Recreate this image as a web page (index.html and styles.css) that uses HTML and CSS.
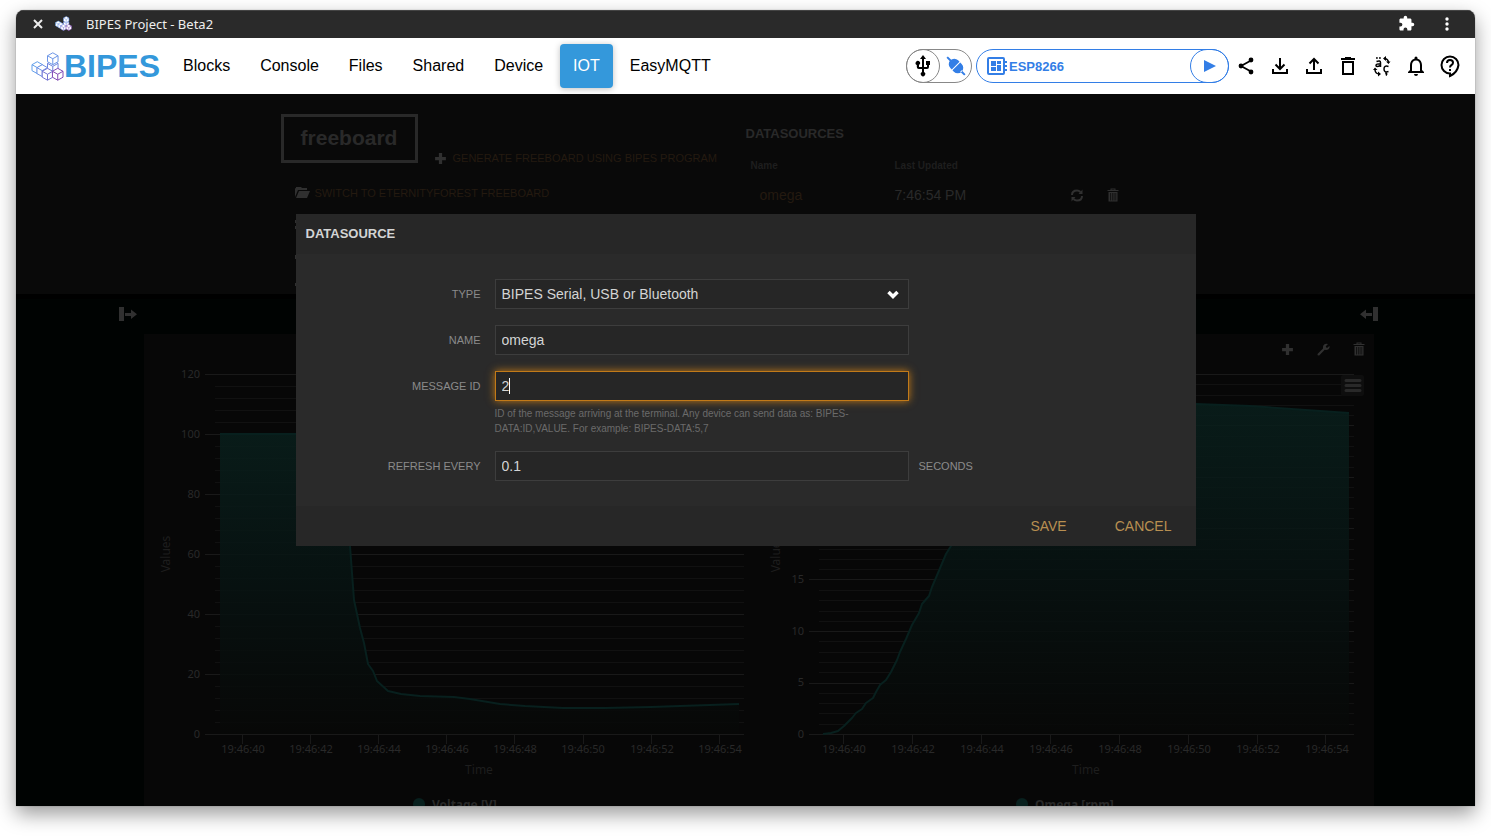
FILE: index.html
```html
<!DOCTYPE html>
<html lang="en">
<head>
<meta charset="utf-8">
<title>BIPES Project - Beta2</title>
<link rel="stylesheet" href="styles.css">
</head>
<body>
<svg class="defs" width="0" height="0" aria-hidden="true">
  <defs>
    <linearGradient id="area" x1="0" y1="0" x2="0" y2="1">
      <stop offset="0" stop-color="#091f1c"/><stop offset=".5" stop-color="#071312"/><stop offset="1" stop-color="#070807"/>
    </linearGradient>
    <g id="cube">
      <path d="M0-18L16-9V9L0 18L-16 9V-9Z"/><path d="M-16-9L0 0L16-9M0 0V18" fill="none"/>
    </g>
    <symbol id="logo" viewBox="94 155 100 87">
      <use href="#cube" x="160" y="198" stroke="#6c83dd"/><use href="#cube" x="160" y="175" stroke="#6b95e6"/>
      <use href="#cube" x="113" y="202" stroke="#5f9eea"/><use href="#cube" x="128" y="211" stroke="#6b90e4"/>
      <use href="#cube" x="144" y="222" stroke="#7373d2"/><use href="#cube" x="175" y="222" stroke="#8148b4"/>
    </symbol>
    <symbol id="plus" viewBox="0 0 12 12"><path d="M4.500 1h3v3.500h3.500v3h-3.500v3.500h-3v-3.500h-3.500v-3h3.500z"/></symbol>
    <symbol id="trash" viewBox="0 0 12 14"><path fill-rule="evenodd" d="M3.500 2V.500h5V2H11.500v1H.500V2zM4.500 2h3v-.600h-3zM1.500 4h9v9.500h-9zM3 5v7.500h.700V5zM4.900 5v7.500h.700V5zM6.700 5v7.500h.700V5zM8.500 5v7.500h.700V5z"/></symbol>
  </defs>
</svg>

<div class="window">
  <div class="titlebar">
    <button class="bar-button" aria-label="Close"><svg width="10" height="10" viewBox="0 0 10 10"><path d="M1 1l8 8M9 1l-8 8" stroke="#eee" stroke-width="2"/></svg></button>
    <svg class="favicon favicon-tile" width="17" height="15"><use href="#logo"/></svg>
    <span class="window-title">BIPES Project - Beta2</span>
    <button class="bar-button" aria-label="Extensions"><svg width="17" height="17" viewBox="0 0 24 24" fill="#fff"><path d="M20.500 11H19V7c0-1.100-.900-2-2-2h-4V3.500a2.500 2.500 0 0 0-5 0V5H4c-1.100 0-2 .900-2 2v3.800h1.500a2.700 2.700 0 0 1 0 5.400H2V20c0 1.100.900 2 2 2h3.800v-1.500a2.700 2.700 0 0 1 5.400 0V22H17c1.100 0 2-.900 2-2v-4h1.500a2.500 2.500 0 0 0 0-5z"/></svg></button>
    <button class="bar-button menu-button" aria-label="Menu"><svg width="4" height="14" fill="#fff"><circle cx="2" cy="2" r="1.700"/><circle cx="2" cy="7" r="1.700"/><circle cx="2" cy="12" r="1.700"/></svg></button>
  </div>

  <header class="header">
    <div class="brand"><svg width="33" height="29"><use href="#logo"/></svg><span>BIPES</span></div>
    <nav class="tabs">
      <a href="#blocks">Blocks</a><a href="#console">Console</a><a href="#files">Files</a><a href="#shared">Shared</a><a href="#device">Device</a><a href="#iot" class="active" aria-current="page">IOT</a><a href="#mqtt">EasyMQTT</a>
    </nav>
    <div class="connection">
      <button class="usb" aria-label="USB"><svg width="24" height="24" viewBox="0 0 24 24"><path d="M15 7v4h1v2h-3V5h2l-3-4-3 4h2v8H8v-2.070A2.200 2.200 0 1 0 5.800 11V13a2 2 0 0 0 2 2H11v3.050a2.200 2.200 0 1 0 2 0V15h3a2 2 0 0 0 2-2v-2h1V7z"/></svg></button>
      <button class="plug" aria-label="Connect"><svg width="20" height="20" viewBox="0 0 20 20" fill="#337ee6"><g transform="rotate(45 10 10)"><path d="M-2.500 9H3v2h-5.500zM17 9h5.500v2H17zM9.500 4.500V15.500H7.500A5.500 5.500 0 0 1 7.500 4.500zM10.500 4.500V15.500H12.500A5.500 5.500 0 0 0 12.500 4.500z"/></g></svg></button>
    </div>
    <div class="device">
      <svg width="22" height="20" viewBox="0 0 22 20" fill="#337ee6"><path fill-rule="evenodd" d="M2 1h14q2 0 2 2v2h2v2h-2v2h2v2h-2v2h2v2h-2v2q0 2-2 2H2q-2 0-2-2V3q0-2 2-2zM2 3v14h14V3zM4 5h5v5H4zM10 5h4v3h-4zM4 11h5v4H4zM10 9h4v6h-4z"/></svg>
      <span>ESP8266</span>
      <button class="run" aria-label="Run"><svg width="12" height="12"><path d="M0 0L12 6L0 12z" fill="#337ee6"/></svg></button>
    </div>
    <div class="tools">
      <button aria-label="Share"><svg viewBox="0 0 24 24"><path d="M17 6.500L7 12l10 5.500" fill="none" stroke="#000" stroke-width="1.800"/><circle cx="17" cy="6" r="2.400"/><circle cx="7" cy="12" r="2.400"/><circle cx="17" cy="18" r="2.400"/></svg></button>
      <button aria-label="Download"><svg viewBox="0 0 24 24" class="line"><path d="M12 4v11M7.500 10.500L12 15l4.500-4.500M5 15v4h14v-4"/></svg></button>
      <button aria-label="Upload"><svg viewBox="0 0 24 24" class="line"><path d="M12 16V5M7.500 9.500L12 5l4.500 4.500M5 15v4h14v-4"/></svg></button>
      <button aria-label="Delete"><svg viewBox="0 0 24 24" class="line"><path d="M5 5h14M9 4h6M7 8h10v12H7z"/></svg></button>
      <button aria-label="Language"><svg viewBox="0 0 24 24" class="line thin"><path d="M6.500 7.500q4-1.500 4 1V13M10.500 10Q6 9.500 6 11.500t4.500 0M6 4h1.800M9 4h1.800M18.500 12.500q-4.500-1.500-4.500 2.500t4.500 2.500M16 18v1.500q1.500 0 0 2M14 4.500q4 0 4.500 4M9.500 20q-4 0-4.500-4"/><path d="M13 4.500l3-2.500v5zM16 7.500h4.500L18.500 10zM3 16h4.500L5 13.500zM8 17.500v5l3-2.500z" fill="#000" stroke="none"/></svg></button>
      <button aria-label="Notifications"><svg viewBox="0 0 24 24"><path d="M12 22a2 2 0 0 0 2-2h-4a2 2 0 0 0 2 2zm6-6v-5c0-3.070-1.630-5.640-4.500-6.320V4a1.500 1.500 0 0 0-3 0v.680C7.640 5.360 6 7.920 6 11v5l-2 2v1h16v-1zm-2 1H8v-6c0-2.480 1.510-4.500 4-4.500s4 2.020 4 4.500z"/></svg></button>
      <button aria-label="Help"><svg viewBox="0 0 24 24" class="line"><path d="M12 2.500a8.500 8.500 0 1 0 0 17V22q7.500-3.500 8.500-11A8.500 8.500 0 0 0 12 2.500zM9 9q0-3 3-3t3 2.700q0 1.500-1.500 2.300T12 13.500M12 15v2"/></svg></button>
    </div>
  </header>

  <main class="stage">
    <section class="admin">
      <div class="admin-inner">
        <div class="admin-left">
          <div class="logo-row">
            <div class="freeboard-logo">freeboard</div>
            <a href="#generate" class="action"><svg width="13" height="13"><use href="#plus"/></svg><span>GENERATE FREEBOARD USING BIPES PROGRAM</span></a>
          </div>
          <a href="#switch" class="action switch"><svg width="15" height="12" viewBox="0 0 15 12"><path d="M0 10V1.500L1 1V0h5l1 1h5v2H3zM1 11L4 4h11l-3 7z"/></svg><span>SWITCH TO ETERNITYFOREST FREEBOARD</span></a>
          <div class="admin-icons">
            <svg width="14" height="12" viewBox="0 0 14 12"><path d="M0 1h14v3H0zM0 7h14v3H0z"/></svg>
            <svg width="14" height="4"><path d="M0 0h14v4H0z"/></svg>
            <svg width="14" height="4"><path d="M0 0h14v3H0z"/></svg>
          </div>
        </div>
        <div class="admin-right">
          <h2>DATASOURCES</h2>
          <table>
            <thead><tr><th class="col-name">Name</th><th class="col-time">Last Updated</th><th></th></tr></thead>
            <tbody><tr>
              <td><a href="#omega">omega</a></td><td>7:46:54 PM</td>
              <td class="row-tools">
                <button aria-label="Refresh"><svg width="12" height="13" viewBox="0 0 12 13"><path d="M1 6Q1 1.500 6 1.500q2 0 3.500 1.500M11 7q0 4.500-5 4.500-2 0-3.500-1.500" class="arc"/><path d="M11.500.500v4.500H7.500zM.500 12.500V8H4.500z"/></svg></button>
                <button aria-label="Delete"><svg width="12" height="14"><use href="#trash"/></svg></button>
              </td>
            </tr></tbody>
          </table>
        </div>
      </div>
    </section>

    <section class="board">
      <div class="column-tools">
        <button aria-label="Add column"><svg width="18" height="14"><path d="M0 0h5v14H0zM6 6h6V2.500l6 4.800-6 4.700V9H6z"/></svg></button>
        <button aria-label="Remove column"><svg width="18" height="14"><path d="M13 0h5v14h-5zM12 6H6V2.500L0 7.300 6 12V9h6z"/></svg></button>
      </div>
      <div class="pane">
        <div class="pane-tools">
          <button aria-label="Add widget"><svg width="13" height="13"><use href="#plus"/></svg></button>
          <button aria-label="Edit pane"><svg width="13" height="13" viewBox="0 0 13 13"><path d="M.500 11L6 5.500Q5.500 2 8 1q1.500-.700 3 0L8.800 3.200l.300 1.300 1.400.300L12.500 2.800Q13 5 11.500 6.200 10 7.300 7.700 6.800L2.200 12.500q-2 .300-1.700-1.500z"/></svg></button>
          <button aria-label="Delete pane"><svg width="12" height="14"><use href="#trash"/></svg></button>
        </div>
        <div class="charts">
          <svg class="chart" viewBox="0 0 600 460" role="img" aria-label="Voltage chart">
            <path class="minor" d="M61 22.500h529M61 34.500h529M61 46.500h529M61 58.500h529M61 82.500h529M61 94.500h529M61 106.500h529M61 118.500h529M61 142.500h529M61 154.500h529M61 166.500h529M61 178.500h529M61 202.500h529M61 214.500h529M61 226.500h529M61 238.500h529M61 262.500h529M61 274.500h529M61 286.500h529M61 298.500h529M61 322.500h529M61 334.500h529M61 346.500h529M61 358.500h529"/>
            <path class="major" d="M51 10.500h539M51 70.500h539M51 130.500h539M51 190.500h539M51 250.500h539M51 310.500h539M51 370.500h539M88.500 371v9M156.500 371v9M224.500 371v9M292.500 371v9M360.500 371v9M429.500 371v9M497.500 371v9M565.500 371v9"/>
            <path class="area" d="M66 69H190L196 182L200 236L206 264L210 279L214 300L219 307L223 317L234 327L247 330L266 332L300 333L316 335L346 340L371 342L409 344L451 344L497 343L585 340V370H66z"/>
            <path class="series" d="M66 70H190L196 182L200 236L206 264L210 279L214 300L219 307L223 317L234 327L247 330L266 332L300 333L316 335L346 340L371 342L409 344L451 344L497 343L585 340"/>
            <g class="ticks end"><text x="46" y="14">120</text><text x="46" y="74">100</text><text x="46" y="134">80</text><text x="46" y="194">60</text><text x="46" y="254">40</text><text x="46" y="314">20</text><text x="46" y="374">0</text></g>
            <g class="ticks mid"><text x="89" y="389">19:46:40</text><text x="157" y="389">19:46:42</text><text x="225" y="389">19:46:44</text><text x="293" y="389">19:46:46</text><text x="361" y="389">19:46:48</text><text x="429" y="389">19:46:50</text><text x="498" y="389">19:46:52</text><text x="566" y="389">19:46:54</text></g>
            <text class="axis" x="325" y="410">Time</text>
            <text class="axis" transform="translate(16 190) rotate(-90)">Values</text>
            <circle class="key" cx="265" cy="440" r="6"/><text class="legend" x="278" y="445">Voltage [V]</text>
          </svg>
          <svg class="chart" viewBox="0 0 600 460" role="img" aria-label="Omega chart">
            <path class="minor" d="M55 360.500h535M55 349.500h535M55 339.500h535M55 329.500h535M55 308.500h535M55 298.500h535M55 288.500h535M55 277.500h535M55 257.500h535M55 247.500h535M55 236.500h535M55 226.500h535M55 205.500h535M55 195.500h535M55 185.500h535M55 175.500h535M55 154.500h535M55 144.500h535M55 133.500h535M55 123.500h535M55 103.500h535M55 92.500h535M55 82.500h535M55 72.500h535M55 51.500h535M55 41.500h535M55 31.500h535M55 20.500h535"/>
            <path class="major" d="M45 10.500h545M45 61.500h545M45 113.500h545M45 164.500h545M45 215.500h545M45 267.500h545M45 319.500h545M45 370.500h545M79.500 371v9M148.500 371v9M217.500 371v9M286.500 371v9M355.500 371v9M424.500 371v9M493.500 371v9M561.500 371v9"/>
            <path class="area" d="M59 370L67 369L74 367L80 362L84 358L88 354L92 349L98 345L102 339L109 334L112 328L116 321L122 316L127 308L133 296L136 288L142 275L148 261L155 249L158 240L165 232L168 223L174 209L182 190L187 182L236 96L296 56L356 40H432L486 42L585 49V370z"/>
            <path class="series" d="M59 370L67 369L74 367L80 362L84 358L88 354L92 349L98 345L102 339L109 334L112 328L116 321L122 316L127 308L133 296L136 288L142 275L148 261L155 249L158 240L165 232L168 223L174 209L182 190L187 182L236 96L296 56L356 40H432L486 42L585 49"/>
            <g class="ticks end"><text x="40" y="219">15</text><text x="40" y="271">10</text><text x="40" y="322">5</text><text x="40" y="374">0</text></g>
            <g class="ticks mid"><text x="80" y="389">19:46:40</text><text x="149" y="389">19:46:42</text><text x="218" y="389">19:46:44</text><text x="287" y="389">19:46:46</text><text x="356" y="389">19:46:48</text><text x="425" y="389">19:46:50</text><text x="494" y="389">19:46:52</text><text x="563" y="389">19:46:54</text></g>
            <text class="axis" x="322" y="410">Time</text>
            <text class="axis" transform="translate(16 190) rotate(-90)">Values</text>
            <circle class="key" cx="258" cy="440" r="6"/><text class="legend" x="271" y="445">Omega [rpm]</text>
            <rect x="577" y="11" width="23" height="21" rx="2" fill="#0e0e0e"/>
            <path d="M582 16.500h14M582 21.500h14M582 26.500h14" stroke="#292929" stroke-width="3" stroke-linecap="round"/>
          </svg>
        </div>
      </div>
    </section>

    <div class="overlay">
      <form class="modal" role="dialog" aria-labelledby="dialog-title">
        <h1 id="dialog-title">DATASOURCE</h1>
        <div class="fields">
          <label for="type">TYPE</label>
          <div class="control">
            <select id="type"><option>BIPES Serial, USB or Bluetooth</option></select>
            <svg class="chevron" width="12" height="9" viewBox="0 0 12 9"><path d="M1.500 2L6 6.500 10.500 2" fill="none" stroke="#fff" stroke-width="3.500"/></svg>
          </div>
          <span></span>
          <label for="name">NAME</label>
          <div class="control"><input id="name" type="text" value="omega"></div>
          <span></span>
          <label for="message">MESSAGE ID</label>
          <div class="control">
            <input id="message" class="focused" type="text" value="2" aria-describedby="message-help"><span class="caret"></span>
            <p id="message-help">ID of the message arriving at the terminal. Any device can send data as: BIPES-DATA:ID,VALUE. For example: BIPES-DATA:5,7</p>
          </div>
          <span></span>
          <label for="refresh">REFRESH EVERY</label>
          <div class="control"><input id="refresh" type="text" value="0.1"></div>
          <span class="unit">SECONDS</span>
        </div>
        <footer><button type="button">SAVE</button><button type="button">CANCEL</button></footer>
      </form>
    </div>
  </main>
</div>
</body>
</html>
```

FILE: styles.css
```css
* { box-sizing: border-box; }

body {
  margin: 0;
  height: 100vh;
  padding: 10px 16px 32px;
  display: flex;
  background: #fff;
  font-family: "Liberation Sans", Arial, sans-serif;
  overflow: hidden;
}

button {
  margin: 0;
  padding: 0;
  border: 0;
  background: none;
  font: inherit;
  color: inherit;
  display: flex;
  align-items: center;
  justify-content: center;
}

a { color: inherit; text-decoration: none; }
svg { display: block; flex: none; }
.defs { position: absolute; }
#cube { fill: #fff; stroke-width: 3; stroke-linejoin: round; }

.window {
  flex: 1;
  min-width: 0;
  display: flex;
  flex-direction: column;
  border-radius: 8px 8px 0 0;
  overflow: hidden;
  box-shadow: 0 0 1px rgba(0, 0, 0, .6), 0 8px 20px rgba(0, 0, 0, .4);
}

/* Title bar */
.titlebar {
  height: 28px;
  flex: none;
  display: flex;
  align-items: center;
  padding: 0 26px 2px 17px;
  background: #2a2a2a;
  border-top: 1px solid #444;
  color: #eee;
  font: 13px "Noto Sans", sans-serif;
}
.favicon { margin: 0 14px 0 12px; }
.window-title { flex: 1; }
.menu-button { margin-left: 30px; }

/* Header */
.header {
  height: 56px;
  flex: none;
  display: flex;
  align-items: center;
  padding: 0 8px 0 15px;
  background: #fff;
}
.brand { display: flex; align-items: center; width: 139px; color: #3498db; font-size: 32px; font-weight: bold; }
.tabs { display: flex; gap: 4px; flex: 1; padding-right: 8px; }
.tabs a { height: 44px; line-height: 43px; padding: 0 13px; border-radius: 4px; font-size: 16px; color: #000; }
.tabs .active { background: #3498db; color: #fff; box-shadow: 0 1px 6px rgba(0, 0, 0, .25); }

.connection { display: flex; width: 66px; height: 34px; margin-right: 4px; border: 1px solid #888; border-radius: 17px; }
.usb { width: 34px; margin: -1px 0 -1px -1px; border: 1px solid #888; border-radius: 17px; }
.plug { flex: 1; }
.device {
  display: flex;
  align-items: center;
  width: 253px;
  height: 34px;
  padding-left: 10px;
  border: 1px solid #337ee6;
  border-radius: 17px;
  color: #337ee6;
  font-size: 13px;
  font-weight: bold;
}
.device span { flex: 1; }
.run { width: 39px; height: 34px; margin-right: -1px; border: 1px solid #337ee6; border-radius: 17px; }
.tools { display: flex; }
.tools button { width: 34px; height: 34px; }
.tools svg { width: 24px; height: 24px; }
.line { fill: none; stroke: #000; stroke-width: 2; }
.thin { stroke-width: 1.5px; }

/* Dimmed dashboard */
.stage { position: relative; flex: 1; min-height: 0; overflow: hidden; background: #000302; }
.admin { height: 200px; padding-top: 20px; background: #090909; }
.admin svg, .board button svg { fill: #303030; }
.admin .arc { fill: none; stroke: #303030; stroke-width: 2; }
.admin-inner { max-width: 930px; margin: 0 auto; display: grid; grid-template-columns: 1fr 1fr; }
.logo-row { display: flex; align-items: flex-end; gap: 16px; }
.freeboard-logo { border: 3px solid #292929; width: 137px; height: 49px; line-height: 42px; text-align: center; color: #292929; font-size: 21px; font-weight: bold; }
.action { display: flex; align-items: center; gap: 6px; color: #241a10; font-size: 11px; line-height: 12px; white-space: nowrap; }
.logo-row .action { height: 10px; }
.switch { gap: 5px; margin: 24px 0 0 14px; }
.admin-icons { display: flex; flex-direction: column; gap: 24px; padding: 20px 0 0 14px; }
.admin-right h2 { margin: 10px 0 0; font-size: 13px; line-height: 20px; color: #292929; }
.admin-right table { width: 100%; table-layout: fixed; border-collapse: collapse; margin-top: 6px; color: #292929; font-size: 14px; }
.admin-right th { height: 30px; padding: 0 5px; text-align: left; font-size: 10px; color: #1e1e1e; }
.admin-right td { height: 30px; padding: 0 5px; }
.col-name { width: 144px; }
.col-time { width: 181px; }
.admin-right td a { padding-left: 9px; color: #241a10; }
.admin-right .row-tools { display: flex; align-items: center; gap: 24px; padding: 0; }

.board { border-top: 5px solid #000; padding: 0 97px 0 103px; }
.column-tools { display: flex; justify-content: space-between; align-items: center; height: 35px; padding-bottom: 5px; }
.pane { margin: 0 4px 0 25px; padding: 0 10px; background: #070707; }
.pane-tools { display: flex; justify-content: flex-end; align-items: center; gap: 23px; height: 30px; margin-right: -1px; }
.charts { display: flex; gap: 10px; }
.chart { flex: 1; min-width: 0; font-family: "Noto Sans", sans-serif; }
.chart .minor { stroke: #111; }
.chart .major { stroke: #191919; }
.minor, .major { shape-rendering: crispEdges; }
.area { fill: url(#area); fill-opacity: .85; }
.series { fill: none; stroke: #08201e; stroke-width: 2; stroke-linejoin: round; }
.ticks { font-size: 11px; fill: #292929; }
.end { text-anchor: end; }
.mid { text-anchor: middle; }
.axis { font-size: 12px; fill: #1e1e1e; text-anchor: middle; }
.key { fill: #08201e; }
.legend { font-size: 12px; font-weight: bold; fill: #292929; }

/* Datasource dialog */
.overlay { position: absolute; inset: 0; display: flex; justify-content: center; align-items: flex-start; padding-top: 120px; }
.modal { width: 900px; max-width: 100%; background: #2a2a2a; color: #d3d4d4; }
.modal h1 { margin: 0; padding: 0 10px; font-size: 13px; line-height: 40px; background: #272727; }
.fields { display: grid; grid-template-columns: 185px 414px 1fr; column-gap: 14px; row-gap: 16px; padding: 25px 0; }
.fields label, .unit { font-size: 11px; line-height: 30px; color: #8b8b8b; }
.fields label { text-align: right; }
.unit { margin-left: -4px; }
.control { position: relative; }
.control input, .control select {
  display: block;
  width: 100%;
  height: 30px;
  padding: 0 6px;
  border: 1px solid #3d3d3d;
  border-radius: 0;
  background: #262626;
  color: #d3d4d4;
  font: 14px "Liberation Sans", Arial, sans-serif;
  appearance: none;
  outline: none;
}
.control .focused { border-color: #c27a18; box-shadow: 0 0 8px #c27a18; }
.chevron { position: absolute; right: 10px; top: 11px; pointer-events: none; }
.caret { position: absolute; left: 14px; top: 7px; width: 1px; height: 16px; background: #fff; }
.control p { width: 375px; margin: 5px 0 -1px; font-size: 10px; line-height: 15px; color: #6b6b6b; }
.modal footer { display: flex; justify-content: flex-end; gap: 48px; height: 40px; padding: 0 24px; background: #272727; color: #b88f51; font-size: 14px; }
```
